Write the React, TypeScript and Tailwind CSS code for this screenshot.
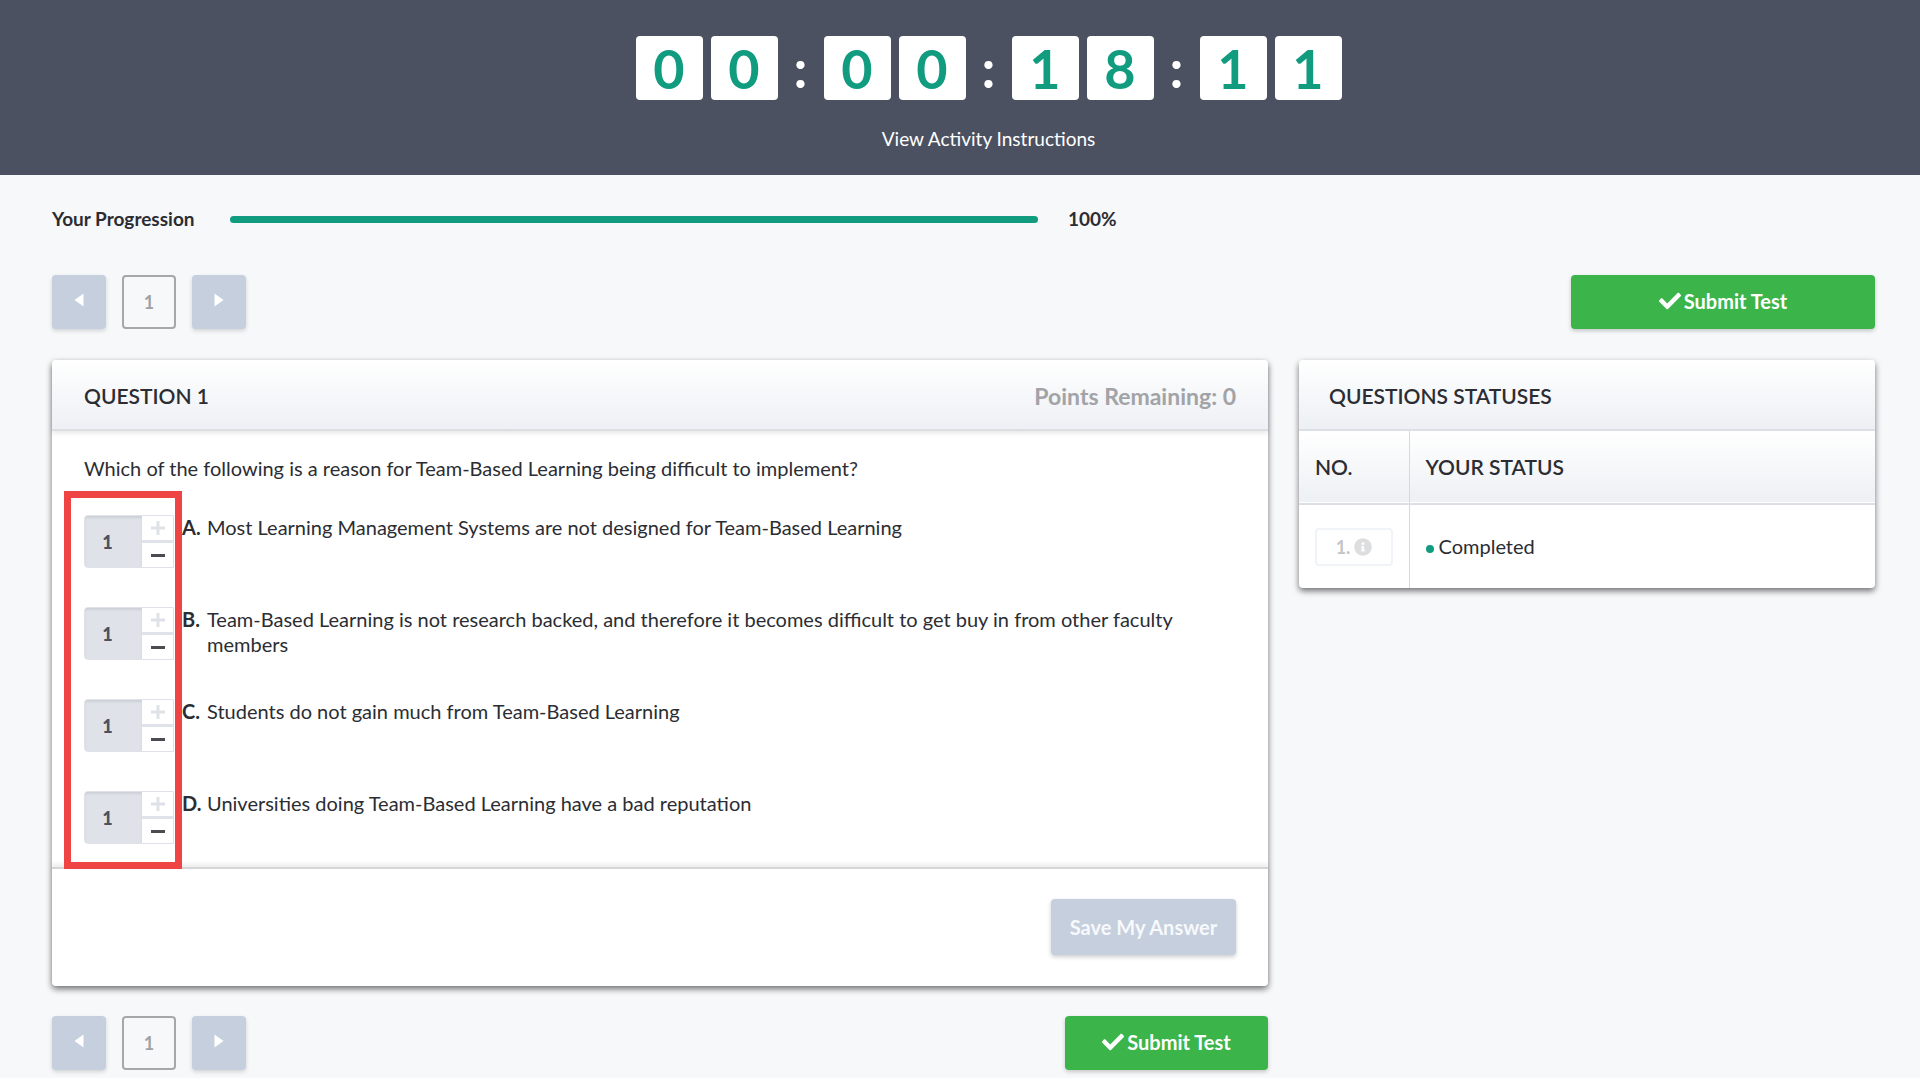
import { useState } from 'react';
import { FaCheck, FaInfoCircle } from 'react-icons/fa';

const TIMER = ['00', '00', '18', '11'];

const OPTIONS = [
  { letter: 'A', text: 'Most Learning Management Systems are not designed for Team-Based Learning' },
  {
    letter: 'B',
    text: 'Team-Based Learning is not research backed, and therefore it becomes difficult to get buy in from other faculty members',
  },
  { letter: 'C', text: 'Students do not gain much from Team-Based Learning' },
  { letter: 'D', text: 'Universities doing Team-Based Learning have a bad reputation' },
];

function Countdown() {
  return (
    <div className="flex items-center text-[54px] font-bold leading-[66px]" role="timer">
      {TIMER.map((pair, i) => (
        <div key={i} className="flex items-center">
          {i > 0 && <span className="w-[46px] text-center text-white">:</span>}
          <div className="flex gap-2">
            {pair.split('').map((digit, j) => (
              <span key={j} className="h-16 w-[67px] rounded bg-white text-center text-[#119c80]">
                {digit}
              </span>
            ))}
          </div>
        </div>
      ))}
    </div>
  );
}

function Pager() {
  const arrow =
    'flex h-[54px] w-[54px] items-center justify-center rounded bg-[#c5cfdd] pb-1 text-white shadow-[0_2px_4px_rgba(0,0,0,0.15)]';
  return (
    <nav className="flex gap-4" aria-label="Questions">
      <button className={arrow} aria-label="Previous question">
        <svg width="10" height="14" viewBox="0 0 10 14" fill="currentColor">
          <path d="M9.5 0.5v13L0.5 7z" />
        </svg>
      </button>
      <button className="h-[54px] w-[54px] rounded border-2 border-[#a6a7a9] text-[18px] font-bold text-[#a0a1a3]">
        1
      </button>
      <button className={arrow} aria-label="Next question">
        <svg width="10" height="14" viewBox="0 0 10 14" fill="currentColor">
          <path d="M0.5 0.5v13L9.5 7z" />
        </svg>
      </button>
    </nav>
  );
}

function SubmitButton({ className }: { className: string }) {
  return (
    <button
      className={`flex h-[54px] items-center justify-center gap-[3px] rounded bg-[#3bb54a] pb-0.5 font-bold text-white shadow-[0_2px_4px_rgba(0,0,0,0.2)] ${className}`}
    >
      <FaCheck className="h-[22px] w-[22px]" />
      Submit Test
    </button>
  );
}

function PointsInput({ letter }: { letter: string }) {
  const [value, setValue] = useState(1);
  return (
    <div className="flex h-[53px] w-[90px] shrink-0 overflow-hidden rounded-l border border-[#dfe2e9] bg-[#dfe2e9]">
      <input
        type="text"
        aria-label={`Points for answer ${letter}`}
        value={value}
        onChange={(e) => setValue(Number(e.target.value) || 0)}
        className="w-[57px] bg-[#dfe2e9] pr-3 text-center text-[18px] font-black text-[#4b5161] shadow-[inset_0_2px_2px_rgba(0,0,0,0.08)] outline-none"
      />
      <div className="flex flex-1 flex-col gap-[3px]">
        <button
          className="flex flex-1 items-center justify-center bg-white text-[#dfe2e9]"
          aria-label="Add a point"
          disabled
        >
          <svg width="14" height="14" viewBox="0 0 14 14" fill="currentColor">
            <path d="M5.5 0h3v5.5H14v3H8.500V14h-3V8.500H0v-3h5.500z" />
          </svg>
        </button>
        <button
          className="flex flex-1 items-center justify-center bg-white text-[#4a4c52]"
          aria-label="Remove a point"
          onClick={() => setValue(Math.max(0, value - 1))}
        >
          <svg width="14" height="14" viewBox="0 0 14 14" fill="currentColor">
            <path d="M0 6h14v3H0z" />
          </svg>
        </button>
      </div>
    </div>
  );
}

function QuestionPanel() {
  return (
    <section className="rounded bg-white shadow-[0_3px_6px_rgba(0,0,0,0.55)]">
      <header className="flex h-[71px] items-center justify-between rounded-t border-b-2 border-[#dcdee2] bg-linear-to-b from-white to-[#eef0f5] px-8 pt-0.5 shadow-[0_2px_5px_rgba(0,0,0,0.1)]">
        <h2 className="text-[21px] font-semibold">QUESTION 1</h2>
        <span className="text-[23px] font-bold text-[#a2a3a6]">Points Remaining: 0</span>
      </header>

      <p className="px-8 pt-6 leading-[26px]">
        Which of the following is a reason for Team-Based Learning being difficult to implement?
      </p>

      <div className="relative mt-[10px] px-8 pt-6 pb-[23px]">
        <ul className="flex flex-col gap-[39px]">
          {OPTIONS.map((option) => (
            <li key={option.letter} className="flex h-[53px] gap-2">
              <PointsInput letter={option.letter} />
              <span className="w-[17px] shrink-0 font-bold leading-[25px]">{option.letter}.</span>
              <span className="max-w-[985px] leading-[25px]">{option.text}</span>
            </li>
          ))}
        </ul>
        {/* highlight around the point inputs */}
        <div className="pointer-events-none absolute top-0 -bottom-0.5 left-3 z-10 w-[118px] border-[7px] border-[#ef4444]" />
      </div>

      <footer className="flex h-[119px] items-center justify-end rounded-b border-t-2 border-[#d6d6d6] px-8 pb-0.5 shadow-[0_-3px_4px_rgba(0,0,0,0.08)]">
        <button className="h-14 w-[185px] rounded bg-[#c5cfdd] font-bold text-[#f7f9fc] shadow-[0_2px_4px_rgba(0,0,0,0.2)]">
          Save My Answer
        </button>
      </footer>
    </section>
  );
}

function StatusPanel() {
  return (
    <section className="overflow-hidden rounded bg-white shadow-[0_3px_6px_rgba(0,0,0,0.55)]">
      <h2 className="flex h-[71px] items-center border-b-2 border-[#dcdfe3] bg-linear-to-b from-white to-[#edf0f4] px-[30px] pt-0.5 text-[21px] font-semibold">
        QUESTIONS STATUSES
      </h2>
      <table className="w-full text-left">
        <thead>
          <tr className="h-[73px] border-b-2 border-[#dcdfe3] bg-linear-to-b from-white to-[#edf0f4]">
            <th className="w-[110px] border-r border-[#d6d8db] px-4 text-[21px] font-semibold">NO.</th>
            <th className="px-4 text-[21px] font-semibold">YOUR STATUS</th>
          </tr>
        </thead>
        <tbody>
          <tr className="h-[84px]">
            <td className="border-r border-[#d6d8db] pl-4">
              <button className="flex h-[38px] w-[78px] items-center justify-center gap-1 rounded-sm border-2 border-[#f0f3f8] text-[18px] font-bold text-[#c4c5c7]">
                1.
                <FaInfoCircle className="h-[18px] w-[18px] text-[#dddedf]" />
              </button>
            </td>
            <td className="px-4 pb-0.5">
              <span className="flex items-center gap-[5px]">
                <span className="mt-[7px] h-2 w-2 rounded-full bg-[#119c80]" />
                Completed
              </span>
            </td>
          </tr>
        </tbody>
      </table>
    </section>
  );
}

export default function App() {
  return (
    <div className="bg-[#f7f8fa] font-['Lato',sans-serif] text-[20px] leading-[26px] text-[#2b2d33]">
      <header className="flex h-[175px] flex-col items-center bg-[#4b5161] pt-[35px] pl-[57px]">
        <Countdown />
        <a href="#instructions" className="mt-[25px] text-[19px] text-white">
          View Activity Instructions
        </a>
      </header>

      <main className="pr-[45px] pb-2 pl-[52px]">
        <div className="grid grid-cols-[1216fr_576fr] gap-x-[31px] pt-[31px]">
          <div className="flex items-center text-[19px] font-bold">
            <span className="w-[178px]">Your Progression</span>
            <div className="h-[7px] flex-1 rounded-full bg-[#119c80]" />
            <span className="w-[230px] pl-[30px]">100%</span>
          </div>
        </div>

        <div className="mt-[43px] flex justify-between">
          <Pager />
          <SubmitButton className="w-[304px]" />
        </div>

        <div className="mt-[31px] grid grid-cols-[1216fr_576fr] items-start gap-x-[31px]">
          <div>
            <QuestionPanel />
            <div className="mt-[30px] flex justify-between">
              <Pager />
              <SubmitButton className="w-[203px]" />
            </div>
          </div>
          <StatusPanel />
        </div>
      </main>
    </div>
  );
}
